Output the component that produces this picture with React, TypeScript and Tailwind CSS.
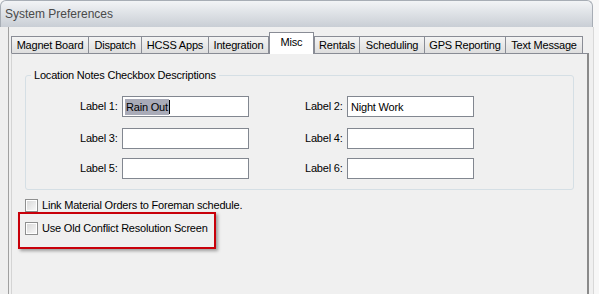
const tabs = [
  { label: 'Magnet Board', w: 'w-[78px]' },
  { label: 'Dispatch', w: 'w-[54px]' },
  { label: 'HCSS Apps', w: 'w-[68px]' },
  { label: 'Integration', w: 'w-[61px]' },
  { label: 'Misc', w: 'w-[45px]', active: true },
  { label: 'Rentals', w: 'w-[46px]' },
  { label: 'Scheduling', w: 'w-[66px]' },
  { label: 'GPS Reporting', w: 'w-[82px]' },
  { label: 'Text Message', w: 'w-[78px]' },
];

const TextBox = ({ value, selected }: { value?: string; selected?: boolean }) => (
  <div className="flex h-[21px] w-[127px] items-center border border-[#828790] bg-white pl-[2px]">
    {value && selected && (
      <>
        <span className="bg-[#a9abb8] px-px leading-[16px]">{value}</span>
        <span className="h-[14px] w-px bg-black" />
      </>
    )}
    {value && !selected && <span className="pl-px leading-[16px]">{value}</span>}
  </div>
);

const Field = ({ label, value, selected, right }: { label: string; value?: string; selected?: boolean; right?: boolean }) => (
  <div className={`flex items-center ${right ? 'ml-[56px]' : ''}`}>
    <span className={right ? 'w-[42px]' : 'w-[96px] pl-[54px]'}>{label}</span>
    <TextBox value={value} selected={selected} />
  </div>
);

const CheckBox = ({ label }: { label: string }) => (
  <div className="flex h-[13px] items-center gap-[4px]">
    <div className="h-[13px] w-[13px] border border-[#8e8f8f] bg-white p-px">
      <div className="h-full w-full bg-gradient-to-br from-[#d9d9d9] to-[#f7f7f7]" />
    </div>
    <span>{label}</span>
  </div>
);

export default function App() {
  return (
    <div className="relative h-[294px] w-[599px] overflow-hidden bg-[#f7f7f7] font-['Liberation_Sans',Arial,sans-serif] text-[11px] tracking-[-0.2px] text-black">
      {/* window */}
      <div className="flex h-full w-[593px] flex-col">
        <div className="flex h-[27px] items-center rounded-t-[6px] border border-b-0 border-[#a7adb5] bg-gradient-to-b from-[#f2f4f6] to-[#c9ced5] pl-[4px] text-[12px] tracking-normal text-[#4a4a4a]">
          System Preferences
        </div>
        <div className="flex flex-1 bg-[#f0f0f0]">
          <div className="w-[9px] border-r border-[#a0a0a0] bg-[#efefef]" />
          <div className="flex flex-1 flex-col pl-[2px] pt-[5px]">
            {/* tab strip */}
            <div className="flex h-[21px] items-end">
              {tabs.map((t) =>
                t.active ? (
                  <div
                    key={t.label}
                    className={`${t.w} relative z-10 -mb-px flex h-[22px] items-center justify-center border border-b-0 border-[#898c95] bg-white pb-[2px]`}
                  >
                    {t.label}
                  </div>
                ) : (
                  <div
                    key={t.label}
                    className={`${t.w} -ml-px first:ml-0 flex h-[17px] items-center justify-center border border-b-0 border-[#898c95] bg-gradient-to-b from-[#f4f4f4] to-[#dedede] [&:nth-child(6)]:ml-0`}
                  >
                    {t.label}
                  </div>
                ),
              )}
            </div>
            {/* tab page */}
            <div className="flex w-[578px] flex-1 flex-col border-l border-t border-r-2 border-l-[#d4d4d4] border-t-[#898c95] border-r-[#8a8a8a]">
              <fieldset className="mx-[13px] mt-[15px] rounded-[3px] border border-[#d5dfe5] px-0 pb-[10px]">
                <legend className="ml-[5px] px-[3px] leading-[13px]">Location Notes Checkbox Descriptions</legend>
                <div className="flex flex-col pt-[14px]">
                  <div className="flex">
                    <Field label="Label 1:" value="Rain Out" selected />
                    <Field label="Label 2:" value="Night Work" right />
                  </div>
                  <div className="mt-[11px] flex">
                    <Field label="Label 3:" />
                    <Field label="Label 4:" right />
                  </div>
                  <div className="mt-[9px] flex">
                    <Field label="Label 5:" />
                    <Field label="Label 6:" right />
                  </div>
                </div>
              </fieldset>
              <div className="ml-[13px] mt-[9px] flex flex-col gap-[10px]">
                <CheckBox label="Link Material Orders to Foreman schedule." />
                <CheckBox label="Use Old Conflict Resolution Screen" />
              </div>
            </div>
          </div>
        </div>
      </div>
      <div className="absolute right-0 top-[27px] h-[267px] w-[6px] border-l border-[#d8d8d8] bg-[#f7f7f7]" />
      {/* callout annotation */}
      <div className="absolute left-[18px] top-[212px] h-[37px] w-[198px] border-2 border-[#c8000a] shadow-[2px_2px_3px_rgba(0,0,0,0.35)]" />
    </div>
  );
}
